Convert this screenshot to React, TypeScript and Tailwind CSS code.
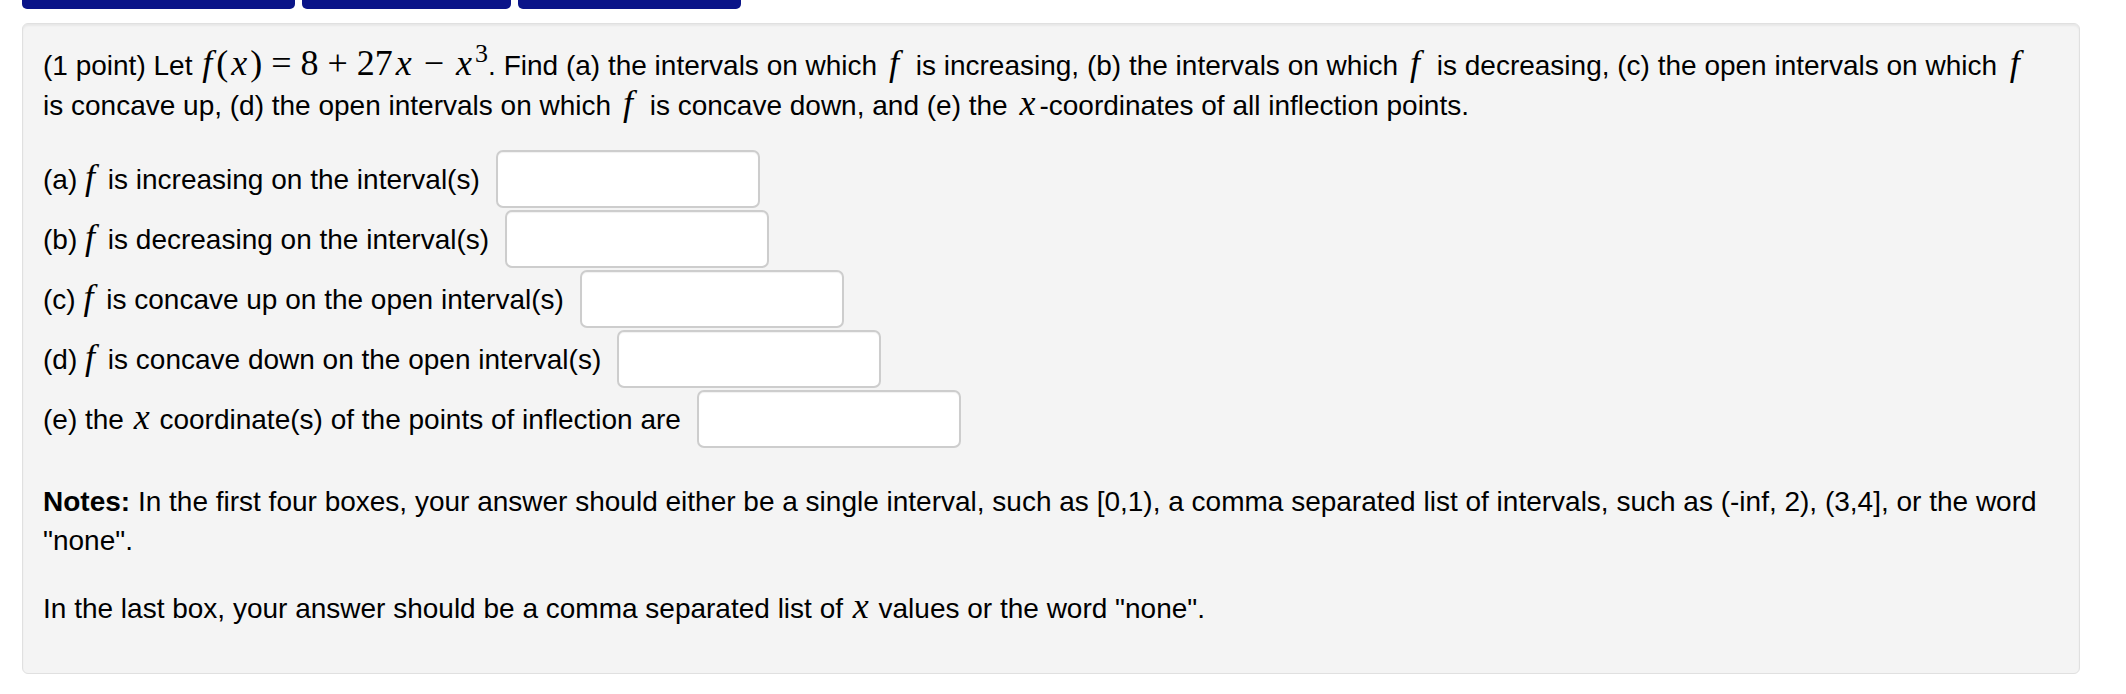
import React from "react";

// italic math letter, rendered like MathJax's TeX italic
function Mi({ children, className = "" }: { children: React.ReactNode; className?: string }) {
  return (
    <span className={`font-['Liberation_Serif',serif] italic text-[36px] leading-none ${className}`}>
      {children}
    </span>
  );
}

// upright math glyphs (digits, operators, parens)
function Mn({ children, className = "" }: { children: React.ReactNode; className?: string }) {
  return (
    <span className={`font-['Liberation_Serif',serif] text-[36px] leading-none whitespace-pre ${className}`}>
      {children}
    </span>
  );
}

const rows = [
  { key: "a", label: " is increasing on the interval(s)" },
  { key: "b", label: " is decreasing on the interval(s)" },
  { key: "c", label: " is concave up on the open interval(s)" },
  { key: "d", label: " is concave down on the open interval(s)" },
];

const boxCls =
  "ml-[16px] h-[58px] w-[264px] rounded-[7px] border-2 border-[#cdcdcd] bg-white shadow-[inset_0_1px_1px_rgba(0,0,0,0.06)]";

export default function App() {
  return (
    <div className="min-h-screen bg-white font-['Liberation_Sans',Arial,sans-serif] text-black">
      {/* tab buttons, only their bottoms are visible */}
      <div className="flex gap-[7px] pl-[22px]">
        <div className="h-[9px] w-[273px] rounded-b-[5px] bg-[#0a1488]" />
        <div className="h-[9px] w-[209px] rounded-b-[5px] bg-[#0a1488]" />
        <div className="h-[9px] w-[223px] rounded-b-[5px] bg-[#0a1488]" />
      </div>

      <div className="ml-[22px] mt-[14px] w-[2058px] rounded-[6px] border border-[#e0e0e0] bg-[#f4f4f4] px-[20px] pb-[45px] pt-[21px] text-[28px] leading-[39px] shadow-[inset_0_2px_2px_rgba(0,0,0,0.05)]">
        <p className="h-[78px] whitespace-nowrap">
          (1 point) Let <Mi className="ml-[2px] mr-[4px]">f</Mi>
          <Mn>(</Mn>
          <Mi className="mx-[3px]">x</Mi>
          <Mn>{") = 8 + 27"}</Mn>
          <Mi className="mx-[3px]">x</Mi>
          <Mn>{" − "}</Mn>
          <Mi className="mx-[3px]">x</Mi>
          <sup className="font-['Liberation_Serif',serif] text-[26px] leading-none">3</sup>. Find
          (a) the intervals on which <Mi className="ml-[4px] mr-[9px]">f</Mi> is increasing, (b)
          the intervals on which <Mi className="ml-[4px] mr-[9px]">f</Mi> is decreasing, (c) the
          open intervals on which <Mi className="ml-[5px]">f</Mi>
          <br />
          is concave up, (d) the open intervals on which <Mi className="ml-[4px] mr-[9px]">f</Mi>{" "}
          is concave down, and (e) the <Mi className="mx-[4px]">x</Mi>-coordinates of all
          inflection points.
        </p>

        <div className="mt-[26px] flex flex-col">
          {rows.map((r) => (
            <div key={r.key} className="flex h-[60px] items-center">
              <span className="whitespace-pre">
                ({r.key}) <Mi className="mr-[5px]">f</Mi>
                {r.label}
              </span>
              <div className={boxCls} />
            </div>
          ))}
          <div className="flex h-[60px] items-center">
            <span className="whitespace-pre">
              (e) the <Mi className="mx-[2px]">x</Mi> coordinate(s) of the points of inflection are
            </span>
            <div className={boxCls} />
          </div>
        </div>

        <p className="mt-[33px] whitespace-nowrap">
          <span className="font-bold">Notes:</span> In the first four boxes, your answer should
          either be a single interval, such as [0,1), a comma separated list of intervals, such as
          (-inf, 2), (3,4], or the word
          <br />
          "none".
        </p>

        <p className="mt-[28px]">
          In the last box, your answer should be a comma separated list of{" "}
          <Mi className="mx-[2px]">x</Mi> values or the word "none".
        </p>
      </div>
    </div>
  );
}
